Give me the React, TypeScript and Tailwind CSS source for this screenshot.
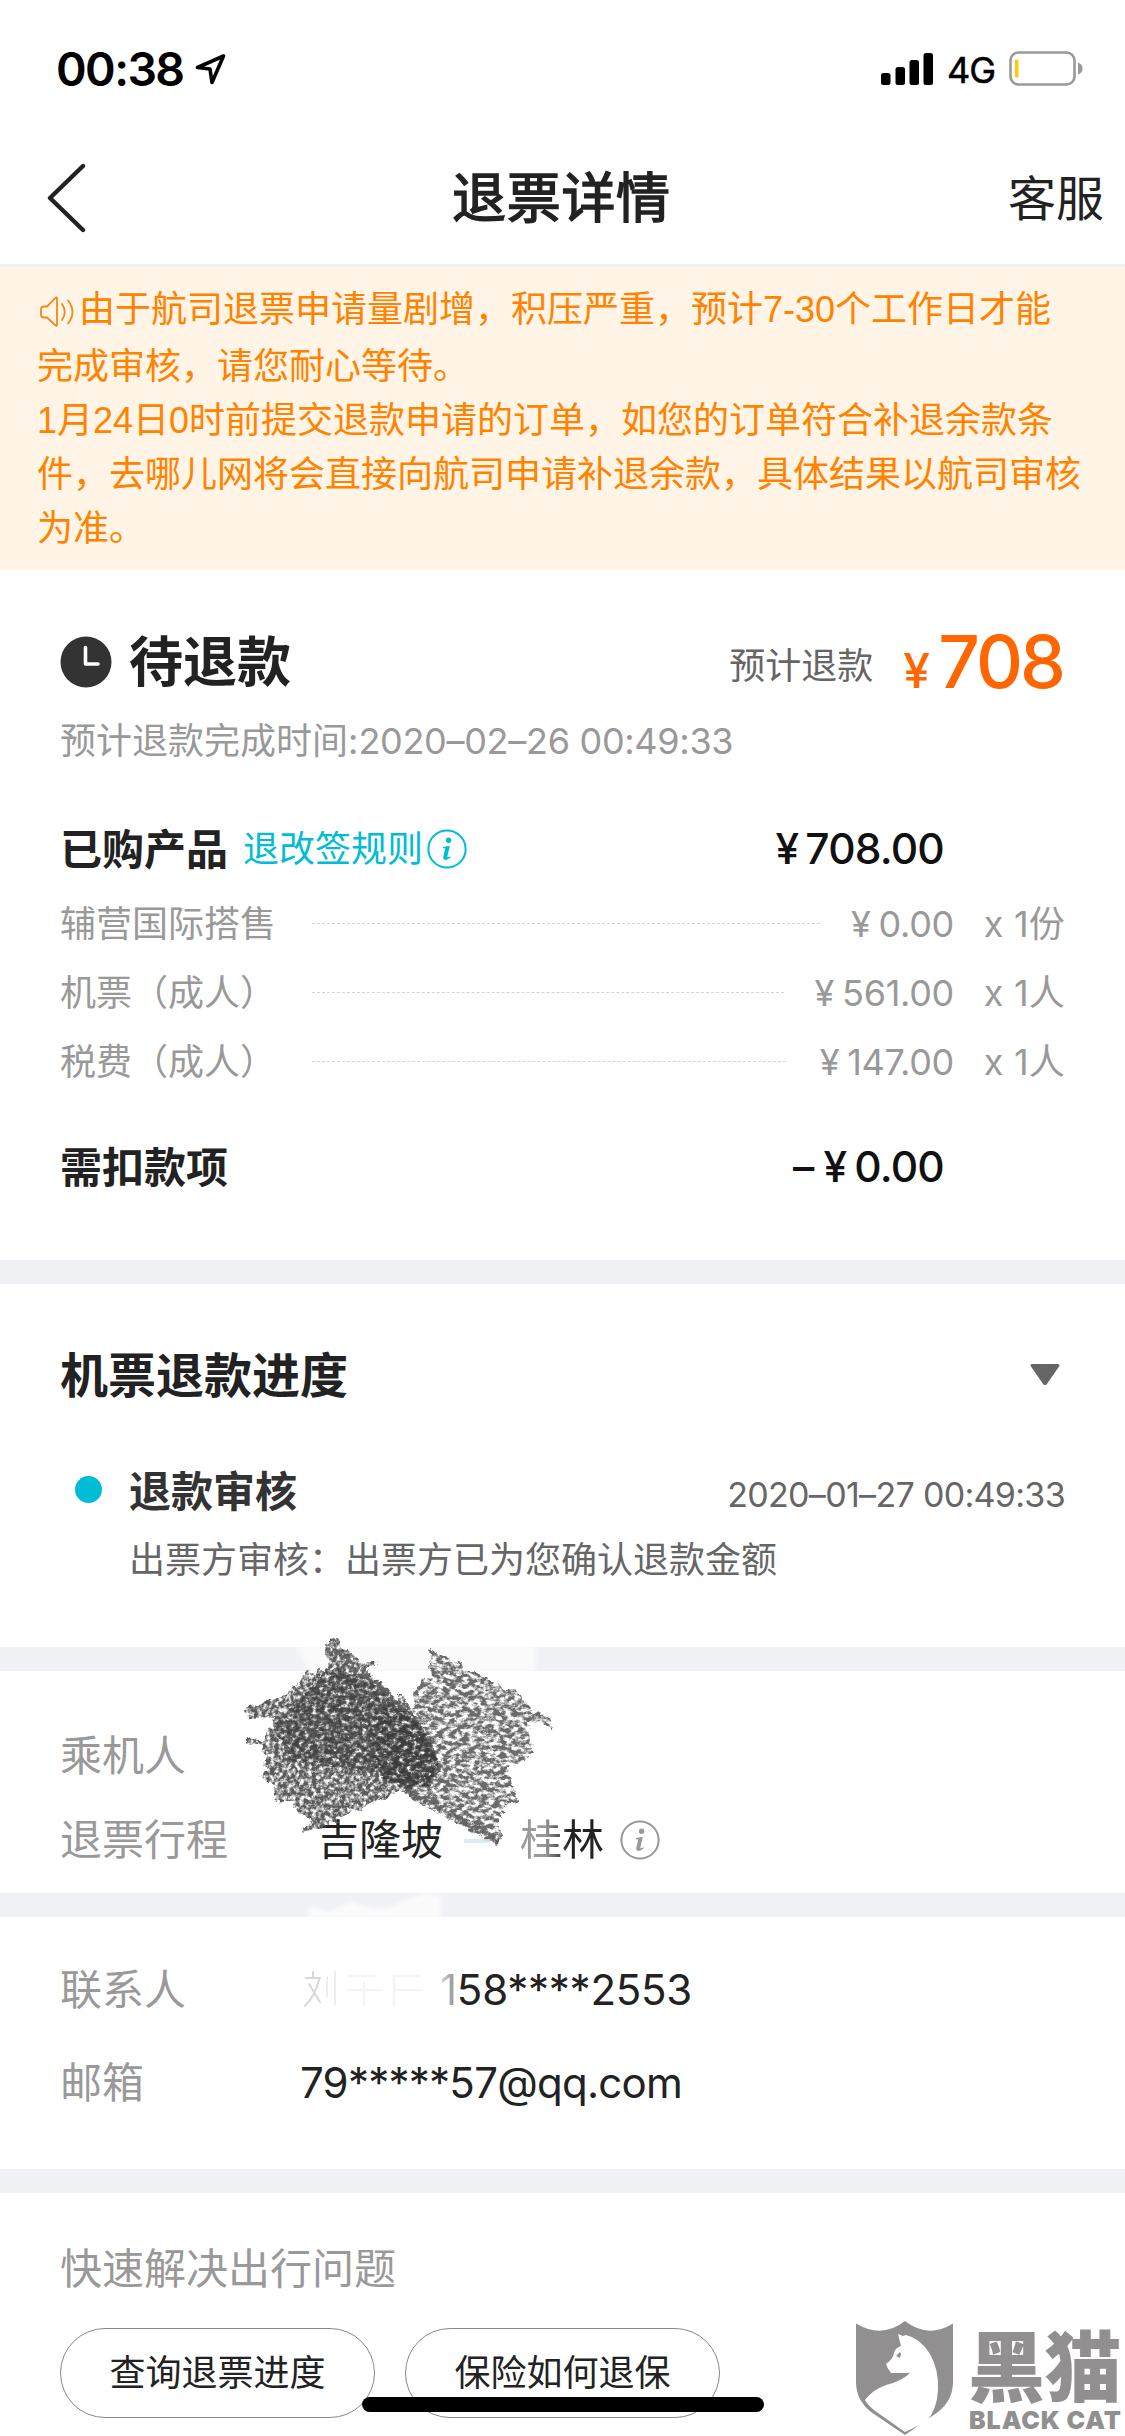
import React from 'react';

const items = [
  { name: '辅营国际搭售', price: '0.00', qty: 'x 1份', dash: 'w-[508px]' },
  { name: '机票（成人）', price: '561.00', qty: 'x 1人', dash: 'w-[472px]' },
  { name: '税费（成人）', price: '147.00', qty: 'x 1人', dash: 'w-[474px]' },
];

function Yen({ className = '' }: { className?: string }) {
  return <span className={className}>¥</span>;
}

function Info({ color }: { color: string }) {
  return (
    <svg width="40" height="40" viewBox="0 0 40 40" className="shrink-0">
      <circle cx="20" cy="20" r="18.6" fill="none" stroke={color} strokeWidth="2" />
      <circle cx="21.6" cy="11.3" r="2.7" fill={color} />
      <path d="M16.2 18 L22.8 16.8 L20.4 27.3 Q20.1 29 22 28 L23.4 27.2 L23.6 28.6 Q20.5 31.2 18 31 Q15.8 30.6 16.4 27.6 L18.2 19.6 L16 19.3 Z" fill={color} />
    </svg>
  );
}

function StatusBar() {
  return (
    <div className="flex h-[132px] items-start justify-between pl-[56px] pr-[41px] pt-[48px]">
      <div className="flex h-[42px] items-center">
        <span className="w-[137px] whitespace-nowrap text-[46.500px] font-semibold leading-[42px] tracking-[-1.600px] text-black">00:38</span>
        <svg width="34" height="32" viewBox="0 0 34 32" className="ml-[1px]">
          <path d="M29.500 3 L3.500 14.500 L16 16 L18 29.500 Z" fill="none" stroke="#000" strokeWidth="3.600" strokeLinejoin="round" />
        </svg>
      </div>
      <div className="flex h-[42px] items-center">
        <svg width="53" height="34" viewBox="0 0 53 34">
          <rect x="0" y="21" width="9.5" height="12" rx="2.5" />
          <rect x="14.5" y="15" width="9.5" height="18" rx="2.5" />
          <rect x="28.5" y="8" width="9.5" height="25" rx="2.5" />
          <rect x="42.5" y="1" width="9.5" height="32" rx="2.5" />
        </svg>
        <span className="ml-[13px] mt-[2px] w-[60px] whitespace-nowrap text-[36px] leading-[42px] tracking-[-1px] text-black [-webkit-text-stroke:0.500px]">4G</span>
        <svg width="75" height="36" viewBox="0 0 75 36" className="ml-[2px]">
          <rect x="1.5" y="1.5" width="64" height="32" rx="8" fill="none" stroke="#999" strokeWidth="2.6" />
          <rect x="6" y="8.5" width="3.5" height="18" rx="1" fill="#ffcc00" />
          <path d="M69 11.5 Q73.5 13 73.5 17.5 Q73.5 22 69 23.5 Z" fill="#999" />
        </svg>
      </div>
    </div>
  );
}

function NavBar() {
  return (
    <div className="grid h-[132px] grid-cols-[452px_1fr_auto] items-center pr-[21px] text-[#222]">
      <svg width="40" height="70" viewBox="0 0 40 70" className="ml-[46px]">
        <path d="M37 3 L4 35 L37 67" fill="none" stroke="#222" strokeWidth="4.400" strokeLinecap="round" strokeLinejoin="round" />
      </svg>
      <h1 className="mt-[2px] text-[54px] leading-[60px] tracking-[0.700px] [-webkit-text-stroke:1.500px]">退票详情</h1>
      <span className="mt-[1px] text-[48px] leading-[60px]">客服</span>
    </div>
  );
}

function Notice() {
  return (
    <div className="h-[306px] border-t-[3px] border-[#f2f0ee] bg-[#fff4e5] pl-[37px] pt-[14px] font-['Liberation_Sans','Noto_Sans_CJK_SC',sans-serif] text-[36px] text-[#ff8200]">
      <div className="flex h-[57px] items-center whitespace-nowrap leading-[57px]">
        <svg width="42" height="36" viewBox="0 0 42 36" className="mt-[4px] shrink-0">
          <g fill="none" stroke="#f08a1c" strokeWidth="1.800" strokeLinejoin="round" strokeLinecap="round">
            <path d="M10 12.500 H7 Q4 12.500 4 15.500 V20.500 Q4 23.500 7 23.500 H10 L18.500 31.500 Q20 32.500 20 30.500 V4.500 Q20 2.500 18.500 3.800 Z" />
            <path d="M25 10 Q30.500 18 25 26" />
            <path d="M31 6.500 Q40 18 31 29.500" />
          </g>
        </svg>
        <span>由于航司退票申请量剧增，积压严重，预计7-30个工作日才能</span>
      </div>
      <div className="mt-[2px] whitespace-nowrap leading-[54px]">
        完成审核，请您耐心等待。<br />
        1月24日0时前提交退款申请的订单，如您的订单符合补退余款条<br />
        件，去哪儿网将会直接向航司申请补退余款，具体结果以航司审核<br />
        为准。
      </div>
    </div>
  );
}

function Summary() {
  return (
    <section className="h-[690px] px-[60px] pt-[56px]">
      <div className="flex h-[72px] items-center">
        <svg width="52" height="52" viewBox="0 0 52 52">
          <circle cx="26" cy="26" r="25.500" fill="#333" />
          <path d="M25.500 11.500 V28 H38" fill="none" stroke="#fff" strokeWidth="3.600" strokeLinecap="round" strokeLinejoin="round" />
        </svg>
        <h2 className="ml-[17px] mt-[1px] text-[54px] font-bold leading-[72px] text-[#222]">待退款</h2>
        <span className="ml-auto mt-[7px] text-[36px] leading-[54px] text-[#666]">预计退款</span>
        <span className="ml-[30px] mt-[8px] flex items-baseline whitespace-nowrap font-medium leading-[72px] text-[#ff6600]">
          <Yen className="w-[35px] text-[48px]" />
          <span className="mr-[2px] text-[73px] tracking-[-3px]">708</span>
        </span>
      </div>
      <p className="mt-[16px] whitespace-nowrap text-[36px] leading-[54px] text-[#999]">
        预计退款完成时间:<span className="tracking-[-0.300px]">2020–02–26 00:49:33</span>
      </p>
      <div className="mt-[50px] flex h-[62px] items-center">
        <h3 className="mt-[2px] text-[42px] font-bold leading-[62px] text-[#222]">已购产品</h3>
        <span className="ml-[15px] mr-[4px] text-[36px] leading-[54px] text-[#00bcd4]">退改签规则</span>
        <Info color="#00bcd4" />
        <span className="ml-auto mr-[121px] whitespace-nowrap text-[42.500px] font-medium tracking-[-0.800px] text-[#111]">
          <Yen className="mr-[7px]" />708.00
        </span>
      </div>
      <div className="mt-[9px] text-[#999]">
        {items.map((it) => (
          <div key={it.name} className="flex h-[69px] items-center text-[36px]">
            <span className="w-[252px] whitespace-nowrap">{it.name}</span>
            <span className={`${it.dash} border-t border-dashed border-[#d4d4d4]`} />
            <span className="ml-auto whitespace-nowrap tracking-[-0.300px]">
              <Yen className="mr-[8px]" />
              {it.price}
            </span>
            <span className="ml-[28px] w-[83px] whitespace-nowrap text-right tracking-[0.200px]">{it.qty}</span>
          </div>
        ))}
      </div>
      <div className="mt-[40px] flex h-[62px] items-center">
        <h3 className="mt-[1px] text-[42px] font-bold leading-[62px] text-[#222]">需扣款项</h3>
        <span className="ml-auto mr-[121px] whitespace-nowrap text-[42.500px] font-medium tracking-[-0.800px] text-[#111]">
          –<Yen className="ml-[10px] mr-[8px]" />0.00
        </span>
      </div>
    </section>
  );
}

function Progress() {
  return (
    <section className="h-[387px] border-t-[24px] border-[#f0f1f4] px-[60px] pt-[56px]">
      <div className="flex h-[72px] items-center justify-between">
        <h2 className="text-[48px] font-bold leading-[72px] text-[#222]">机票退款进度</h2>
        <svg width="32" height="24" viewBox="0 0 32 24" className="mb-[2px] mr-[4px]">
          <path d="M3 2.500 H29 L16.500 20.500 H15.500 Z" fill="#666" stroke="#666" strokeWidth="3" strokeLinejoin="round" />
        </svg>
      </div>
      <div className="mt-[48px] flex h-[62px] items-center">
        <span className="-mt-[3px] ml-[15px] h-[27px] w-[27px] rounded-full bg-[#00bcd4]" />
        <span className="ml-[27px] mt-[1px] text-[42px] font-bold leading-[62px] text-[#333]">退款审核</span>
        <span className="ml-auto mt-[6px] whitespace-nowrap text-[34px] tracking-[-0.680px] text-[#666]">2020–01–27 00:49:33</span>
      </div>
      <p className="ml-[69px] mt-[11px] text-[36px] leading-[54px] text-[#666]">出票方审核：出票方已为您确认退款金额</p>
    </section>
  );
}

function Scribble() {
  return (
    <svg className="pointer-events-none absolute left-[200px] top-[-50px]" width="480" height="320" viewBox="0 0 480 320">
      <defs>
        <filter id="chalk" x="0" y="0" width="480" height="320" filterUnits="userSpaceOnUse">
          <feTurbulence type="fractalNoise" baseFrequency="0.09" numOctaves="4" seed="4" result="warp" />
          <feDisplacementMap in="SourceGraphic" in2="warp" scale="12" xChannelSelector="R" yChannelSelector="G" result="shape" />
          <feTurbulence type="fractalNoise" baseFrequency="0.24" numOctaves="4" seed="9" />
          <feColorMatrix type="matrix" values="0 0 0 0 0  0 0 0 0 0  0 0 0 0 0  3 0 0 0 -0.8" result="grain" />
          <feComposite in="shape" in2="grain" operator="in" />
        </filter>
        <filter id="chalkSparse" x="0" y="0" width="480" height="320" filterUnits="userSpaceOnUse">
          <feTurbulence type="fractalNoise" baseFrequency="0.09" numOctaves="4" seed="7" result="warp" />
          <feDisplacementMap in="SourceGraphic" in2="warp" scale="12" xChannelSelector="R" yChannelSelector="G" result="shape" />
          <feTurbulence type="fractalNoise" baseFrequency="0.16 0.24" numOctaves="4" seed="21" />
          <feColorMatrix type="matrix" values="0 0 0 0 0  0 0 0 0 0  0 0 0 0 0  4 0 0 0 -1.4" result="grain" />
          <feComposite in="shape" in2="grain" operator="in" />
        </filter>
        <filter id="soft"><feGaussianBlur stdDeviation="3" /></filter>
      </defs>
      <path d="M96 23 H336 V51 H110 Z" fill="#fff" opacity="0.7" filter="url(#soft)" />
      <g filter="url(#chalkSparse)" fill="#6a6a6a">
        <path d="M228 30 L236 32 L318 72 L330 88 L352 100 L350 108 L326 98 L334 130 L322 140 L308 146 L312 168 L318 180 L302 188 L298 204 L302 214 L292 222 L262 204 L206 172 L176 150 L212 100 L216 66 L232 52 Z" />
        <path d="M250 92 L310 112 L330 128 L305 142 L290 170 L296 216 L250 194 L208 170 L230 140 Z" opacity="0.500" />
      </g>
      <g filter="url(#chalk)" fill="#5a5a5a">
        <path d="M126 24 L136 18 L146 30 L162 42 L176 38 L178 44 L166 50 L208 86 L232 120 L240 150 L226 164 L198 172 L160 188 L120 206 L102 210 L112 198 L94 188 L98 182 L76 180 L74 168 L60 156 L66 140 L64 124 L46 122 L46 114 L62 120 L74 98 L46 96 L44 90 L76 78 L100 62 L104 50 L118 52 L130 38 Z" />
      </g>
      <g filter="url(#chalkSparse)" fill="#3c3c3c">
        <path d="M126 48 L160 48 L208 88 L236 130 L234 156 L206 170 L176 152 L90 140 L74 104 L104 74 Z" opacity="0.800" />
        <path d="M180 86 L208 92 L238 140 L230 162 L206 170 L170 148 Z" />
      </g>
      <g filter="url(#chalk)" stroke="#606060" fill="none" strokeLinecap="round">
        <path d="M206 170 L296 218" strokeWidth="7" />
        <path d="M132 28 L210 90" strokeWidth="7" />
      </g>
      <path d="M264 220 H290" stroke="#d3e8ee" strokeWidth="4" opacity="0.800" />
    </svg>
  );
}

function Trip() {
  return (
    <section className="relative h-[246px] border-t-[24px] border-[#f0f1f4] px-[60px] pt-[54px] text-[42px]">
      <div className="flex h-[62px] items-center leading-[62px] text-[#999]">乘机人</div>
      <div className="mt-[22px] flex h-[62px] items-center leading-[62px]">
        <span className="w-[257px] text-[#999]">退票行程</span>
        <span className="w-[203px] text-[#222]">吉隆坡</span>
        <span className="bg-gradient-to-r from-[#999] from-30% to-[#222] to-60% bg-clip-text text-transparent">桂林</span>
        <span className="ml-[16px] flex"><Info color="#999" /></span>
      </div>
      <Scribble />
    </section>
  );
}

function Contact() {
  return (
    <section className="relative h-[276px] border-t-[24px] border-[#f0f1f4] px-[60px] pt-[42px] text-[42px]">
      <svg className="pointer-events-none absolute left-[290px] top-[-24px]" width="170" height="24" viewBox="0 0 170 24">
        <defs>
          <filter id="wisp"><feGaussianBlur stdDeviation="2" /></filter>
        </defs>
        <path d="M16 26 L20 13 L38 19 L60 9 L84 16 L100 14 L134 0 L152 3 L150 26 Z" fill="#fff" opacity="0.700" filter="url(#wisp)" />
      </svg>
      <div className="flex h-[62px] items-center leading-[62px]">
        <span className="w-[242px] text-[#999]">联系人</span>
        <svg width="138" height="44" viewBox="0 0 138 44">
          <g fill="none" strokeLinecap="round">
            <path d="M4 10 H18 M11 4 V10 M17 12 Q13 28 3 38 M7 16 L18 34" stroke="#d8d8d8" strokeWidth="2" />
            <path d="M25 9 V28 M33 4 V36" stroke="#eeeeee" strokeWidth="2" />
            <path d="M48 8 H72 M46 22 H80 M62 14 V36 M92 8 H116 M92 8 V38 M92 22 H120" stroke="#f5f5f5" strokeWidth="2.500" />
          </g>
        </svg>
        <span className="whitespace-nowrap tracking-[-0.250px] text-[#222]">
          <span className="bg-gradient-to-r from-[#ddd] to-[#888] bg-clip-text text-transparent">1</span>58****2553
        </span>
      </div>
      <div className="mt-[31px] flex h-[62px] items-center leading-[62px]">
        <span className="w-[240px] text-[#999]">邮箱</span>
        <span className="whitespace-nowrap tracking-[-0.750px] text-[#222]">79*****57@qq.com</span>
      </div>
    </section>
  );
}

function CatLogo() {
  return (
    <div className="absolute left-[854px] top-[2318px] flex h-[118px] w-[271px] text-[#918f90]">
      <svg width="102" height="118" viewBox="0 0 102 118" className="shrink-0">
        <path d="M2 5.500 Q28 21 51 3 Q74 21 99 5.500 V64 Q99 82 84 94 L51 117 L17 94 Q2 82 2 64 Z" fill="#918f90" />
        <path d="M47 28 L44 16 L49 18 L52 17 Q66 20 76 36 Q85 52 84 72 Q83 92 72 104 L51 114 L24 95 Q14 88 11 82 Q18 72 32 67 Q48 63 56 55 L37 55 Q33 50 32 46 Q39 41 40 35 Q41 30 47 28 Z" fill="#fff" />
        <path d="M42 38 L46 34 L47 36 L46 40 Z" fill="#918f90" />
      </svg>
      <div className="ml-[12px] flex flex-col">
        <span className="mt-[3px] h-[84px] whitespace-nowrap font-['Noto_Sans_CJK_SC',sans-serif] text-[77px] font-black leading-[84px] tracking-[-0.500px]">黑猫</span>
        <span className="ml-[1px] h-[30px] whitespace-nowrap text-[25px] font-black leading-[30px] tracking-[0.900px]">BLACK CAT</span>
      </div>
    </div>
  );
}

function Help() {
  return (
    <section className="h-[267px] border-t-[24px] border-[#f0f1f4] px-[60px] pt-[45px]">
      <h2 className="text-[42px] leading-[62px] text-[#999]">快速解决出行问题</h2>
      <div className="mt-[28px] flex gap-[30px] text-[36px] text-[#222]">
        <button className="h-[90px] w-[315px] rounded-full border-[1.500px] border-[#888] leading-[84px]">查询退票进度</button>
        <button className="h-[90px] w-[315px] rounded-full border-[1.500px] border-[#888] leading-[84px]">保险如何退保</button>
      </div>
    </section>
  );
}

export default function App() {
  return (
    <main className="relative h-[2436px] w-[1125px] overflow-hidden bg-white font-['Inter','Noto_Sans_CJK_SC',sans-serif]">
      <StatusBar />
      <NavBar />
      <Notice />
      <Summary />
      <Progress />
      <Trip />
      <Contact />
      <Help />
      <div className="absolute left-[362px] top-[2397px] h-[15px] w-[402px] rounded-full bg-black" />
      <CatLogo />
    </main>
  );
}
